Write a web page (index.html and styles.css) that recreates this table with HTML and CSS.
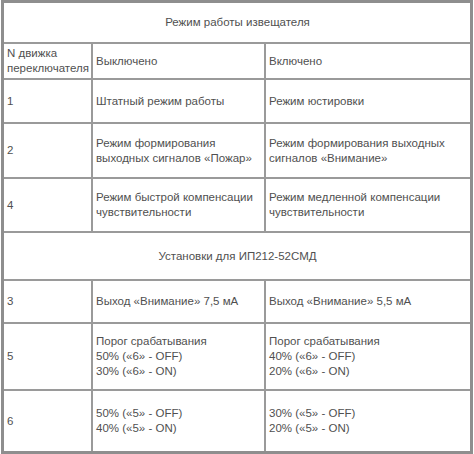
FILE: index.html
```html
<!DOCTYPE html>
<html lang="ru">
<head>
<meta charset="utf-8">
<link rel="stylesheet" href="styles.css">
</head>
<body>
<div class="wrap">
<table class="grid">
  <colgroup>
    <col class="c1">
    <col class="c2">
    <col class="c3">
  </colgroup>
  <tr class="h41"><td colspan="3" class="center">Режим работы извещателя</td></tr>
  <tr class="h36"><td>N движка<br>переключателя</td><td>Выключено</td><td class="last">Включено</td></tr>
  <tr class="h44"><td>1</td><td>Штатный режим работы</td><td class="last">Режим юстировки</td></tr>
  <tr class="h55"><td>2</td><td>Режим формирования<br>выходных сигналов «Пожар»</td><td class="last">Режим формирования выходных<br>сигналов «Внимание»</td></tr>
  <tr class="h54"><td>4</td><td>Режим быстрой компенсации<br>чувствительности</td><td class="last">Режим медленной компенсации<br>чувствительности</td></tr>
  <tr class="h48"><td colspan="3" class="center">Установки для ИП212-52СМД</td></tr>
  <tr class="h43"><td>3</td><td>Выход «Внимание» 7,5 мА</td><td class="last">Выход «Внимание» 5,5 мА</td></tr>
  <tr class="h67"><td>5</td><td>Порог срабатывания<br>50% («6» - OFF)<br>30% («6» - ON)</td><td class="last">Порог срабатывания<br>40% («6» - OFF)<br>20% («6» - ON)</td></tr>
  <tr class="h60 bottom"><td>6</td><td>50% («5» - OFF)<br>40% («5» - ON)</td><td class="last">30% («5» - OFF)<br>20% («5» - ON)</td></tr>
</table>
</div>
</body>
</html>
```

FILE: styles.css
```css
html, body {
  margin: 0;
  padding: 0;
  background: #ffffff;
}

.wrap {
  padding-left: 1px;
}

.grid {
  width: 472px;
  table-layout: fixed;
  border-collapse: separate;
  border-spacing: 0;
  border: 3px solid #8e8e8e;
  font-family: "Liberation Sans", Arial, sans-serif;
  font-size: 11.5px;
  line-height: 15px;
  color: #505050;
}

.c1 { width: 89px; }
.c2 { width: 173px; }
.c3 { width: 204px; }

.grid td {
  box-sizing: border-box;
  padding: 0 2px 0 3px;
  vertical-align: middle;
  text-align: left;
  border-right: 2px solid #9a9a9a;
  border-bottom: 2px solid #9a9a9a;
}

.grid td.last,
.grid td.center {
  border-right: none;
}

.grid td.center {
  text-align: center;
}

.grid tr.bottom td {
  border-bottom: none;
}

.h41 { height: 41px; }
.h36 { height: 36px; }
.h44 { height: 44px; }
.h55 { height: 55px; }
.h54 { height: 54px; }
.h48 { height: 48px; }
.h43 { height: 43px; }
.h67 { height: 67px; }
.h60 { height: 60px; }
```
